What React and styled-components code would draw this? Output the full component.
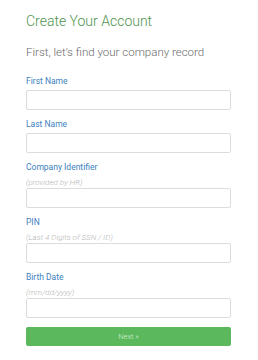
import React from 'react';
import styled, { createGlobalStyle } from 'styled-components';

const GlobalStyle = createGlobalStyle`
  html, body {
    margin: 0;
    padding: 0;
    background: #fff;
    font-family: Roboto, "Liberation Sans", sans-serif;
  }
`;

const Page = styled.div`
  width: 258px;
  padding: 11px 27px 0 26px;
  box-sizing: border-box;
`;

const Title = styled.h1`
  margin: 0;
  font-size: 14px;
  font-weight: 300;
  color: #4f944f;
  line-height: 20px;
`;

const Subtitle = styled.h2`
  margin: 13px 0 0;
  font-size: 11.5px;
  font-weight: 300;
  color: #6a6a6a;
  line-height: 16px;
`;

const Form = styled.form`
  display: flex;
  flex-direction: column;
  margin-top: 15px;
`;

const Field = styled.div`
  display: flex;
  flex-direction: column;
  margin-bottom: 8px;
`;

const Label = styled.label`
  font-size: 8.5px;
  color: #3d7fc1;
  line-height: 12px;
  margin-bottom: 3px;
`;

const Hint = styled.span`
  font-size: 8px;
  font-weight: 300;
  font-style: italic;
  color: #b5b5b5;
  line-height: 9px;
  margin: 2px 0 1px;
`;

const Input = styled.input`
  height: 20px;
  box-sizing: border-box;
  border: 1px solid #dcdcdc;
  border-radius: 2px;
  background: #fff;
  padding: 0 6px;
  font-size: 9px;
  outline: none;
`;

const Button = styled.button`
  height: 19px;
  margin-top: 1px;
  border: none;
  border-radius: 2px;
  background: #5cb85c;
  color: #d9f0d9;
  font-family: Roboto, "Liberation Sans", sans-serif;
  font-size: 7.5px;
  font-weight: 300;
  cursor: pointer;
`;

const fields = [
  { label: 'First Name' },
  { label: 'Last Name' },
  { label: 'Company Identifier', hint: '(provided by HR)' },
  { label: 'PIN', hint: '(Last 4 Digits of SSN / ID)' },
  { label: 'Birth Date', hint: '(mm/dd/yyyy)' },
];

export default function App() {
  return (
    <Page>
      <GlobalStyle />
      <Title>Create Your Account</Title>
      <Subtitle>First, let&rsquo;s find your company record</Subtitle>
      <Form onSubmit={(e) => e.preventDefault()}>
        {fields.map((f) => (
          <Field key={f.label}>
            <Label>{f.label}</Label>
            {f.hint && <Hint>{f.hint}</Hint>}
            <Input type="text" />
          </Field>
        ))}
        <Button type="submit">Next &raquo;</Button>
      </Form>
    </Page>
  );
}
